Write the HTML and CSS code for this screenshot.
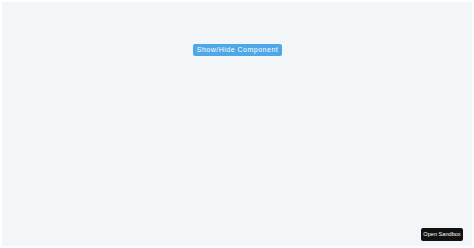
FILE: index.html
```html
<!DOCTYPE html>
<html lang="en">
<head>
    <meta charset="UTF-8">
    <meta name="viewport" content="width=device-width, initial-scale=1.0">
    <title>Show/Hide Component</title>
    <link rel="stylesheet" href="styles.css">
</head>
<body>
    <div class="app">
        <button class="toggle-btn">Show/Hide Component</button>
    </div>
    <a class="sandbox-btn" href="#">Open Sandbox</a>
</body>
</html>
```

FILE: styles.css
```css
* {
    margin: 0;
    padding: 0;
    box-sizing: border-box;
}

body {
    font-family: 'Liberation Sans', Arial, sans-serif;
    background: #ffffff;
    width: 474px;
    height: 248px;
    padding: 2px;
    overflow: hidden;
}

.app {
    background: #f3f6f9;
    height: 244px;
    display: flex;
    justify-content: center;
    align-items: flex-start;
    padding-top: 42px;
}

.toggle-btn {
    background: #4ea7e6;
    color: #ffffff;
    border: none;
    border-radius: 2px;
    height: 12px;
    width: 89px;
    font-family: 'Liberation Sans', Arial, sans-serif;
    font-size: 7px;
    letter-spacing: 0.5px;
    line-height: 12px;
    padding: 0;
    margin-left: 1px;
    cursor: pointer;
}

.sandbox-btn {
    position: absolute;
    right: 11px;
    bottom: 7px;
    width: 42px;
    height: 13px;
    background: #111111;
    color: #ffffff;
    font-size: 5.6px;
    line-height: 13px;
    text-align: center;
    border-radius: 2px;
    text-decoration: none;
}
```
